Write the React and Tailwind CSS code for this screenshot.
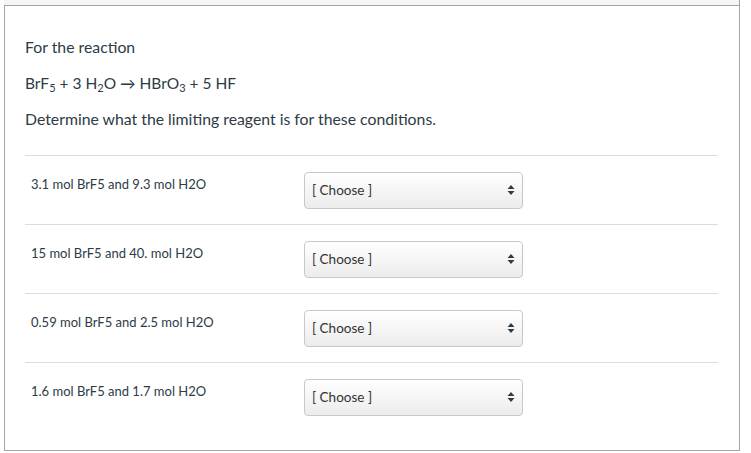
import React from 'react';

const rows = [
  '3.1 mol BrF5 and 9.3 mol H2O',
  '15 mol BrF5 and 40. mol H2O',
  '0.59 mol BrF5 and 2.5 mol H2O',
  '1.6 mol BrF5 and 1.7 mol H2O',
];

function Select() {
  return (
    <div className="flex h-[37px] w-[219px] items-center justify-between rounded-[4px] border border-[#c8c8c8] bg-gradient-to-b from-white to-[#ececec] pl-[7px] pr-[7px] shadow-[inset_0_1px_0_#fff]">
      <span className="text-[13.5px] text-[#333]">[ Choose ]</span>
      <svg width="8" height="12" viewBox="0 0 8 12">
        <path d="M4 1 L7.5 5 L0.5 5 Z" fill="#2d3b45" />
        <path d="M4 11 L7.5 7 L0.5 7 Z" fill="#2d3b45" />
      </svg>
    </div>
  );
}

export default function App() {
  return (
    <div className="h-[453px] w-[751px] bg-white font-['Lato','Noto_Sans',sans-serif] text-[#2d3b45]">
      <div className="ml-[4px] h-[6px] w-[736px] border-b border-r border-[#a5a5a5] bg-[#f5f5f5]" />
      <div className="ml-[4px] h-[445px] w-[736px] border-x border-b border-[#a5a5a5] px-[20px] pt-[30px]">
        <p className="mb-[14px] text-[15.8px] leading-[22px]">For the reaction</p>
        <p className="mb-[14px] text-[15.5px] leading-[22px]">
          BrF<sub className="text-[11px]">5</sub> + 3 H<sub className="text-[11px]">2</sub>O → HBrO<sub className="text-[11px]">3</sub> + 5 HF
        </p>
        <p className="text-[15.8px] leading-[22px]">Determine what the limiting reagent is for these conditions.</p>
        <div className="mt-[25px] w-[693px]">
          {rows.map((r, i) => (
            <div key={i} className="flex h-[69px] items-center border-t border-[#dcdcdc]">
              <span className="mb-[10px] w-[279px] pl-[6px] text-[13px]">{r}</span>
              <Select />
            </div>
          ))}
        </div>
      </div>
    </div>
  );
}
